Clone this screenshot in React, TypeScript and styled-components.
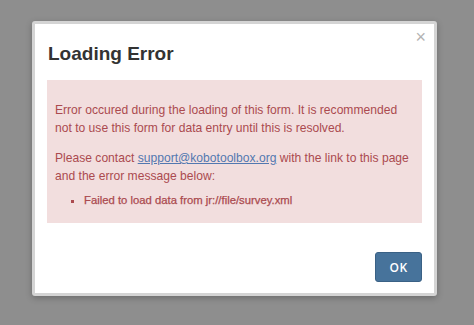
import React from 'react';
import styled, { createGlobalStyle } from 'styled-components';

const GlobalStyle = createGlobalStyle`
  html, body {
    margin: 0;
    padding: 0;
    background: #8e8e8e;
    font-family: "Liberation Sans", Arial, sans-serif;
  }
`;

const Backdrop = styled.div`
  width: 474px;
  height: 325px;
  background: #8e8e8e;
  padding: 21px 0 0 32px;
  box-sizing: border-box;
`;

const Modal = styled.div`
  width: 405px;
  height: 275px;
  box-sizing: border-box;
  background: #fff;
  border: 3px solid #d4d4d4;
  border-radius: 3px;
  box-shadow: 0 2px 6px rgba(0, 0, 0, 0.25);
  display: flex;
  flex-direction: column;
  position: relative;
`;

const Header = styled.div`
  padding: 19px 12px 0 13px;
`;

const Title = styled.h2`
  margin: 0;
  font-size: 19px;
  line-height: 22px;
  font-weight: bold;
  color: #333;
`;

const Close = styled.button`
  position: absolute;
  top: 4px;
  right: 8px;
  border: none;
  background: none;
  padding: 0;
  font-family: "Liberation Sans", Arial, sans-serif;
  font-size: 18px;
  line-height: 18px;
  color: #b3b3b3;
  cursor: pointer;
`;

const Body = styled.div`
  padding: 15px 12px 0 12px;
`;

const Alert = styled.div`
  background: #f2dede;
  color: #ab4a4f;
  padding: 22px 5px 11px 8px;
  height: 143px;
  box-sizing: border-box;
`;

const Para = styled.p<{ $gap?: number }>`
  margin: 0 0 ${(p) => p.$gap ?? 13}px 0;
  font-size: 12.1px;
  line-height: 17.5px;
`;

const Link = styled.a`
  color: #5278b0;
  text-decoration: underline;
`;

const List = styled.ul`
  margin: 0;
  padding-left: 29px;
  font-size: 11.3px;
  line-height: 14px;
  font-weight: normal;
  list-style: square;
  -webkit-text-stroke: 0.25px #ab4a4f;
`;

const Footer = styled.div`
  margin-top: auto;
  padding: 0 12px 11px 0;
  display: flex;
  justify-content: flex-end;
`;

const OkButton = styled.button`
  width: 47px;
  height: 30px;
  background: #47739b;
  border: 1px solid #3a6185;
  border-radius: 3px;
  color: #fff;
  font-family: "Open Sans", sans-serif;
  font-size: 12px;
  font-weight: 600;
  letter-spacing: 0.5px;
  cursor: pointer;
`;

export default function App() {
  return (
    <>
      <GlobalStyle />
      <Backdrop>
        <Modal>
          <Close aria-label="Close">×</Close>
          <Header>
            <Title>Loading Error</Title>
          </Header>
          <Body>
            <Alert>
              <Para>
                Error occured during the loading of this form. It is recommended not to use this
                form for data entry until this is resolved.
              </Para>
              <Para $gap={8}>
                Please contact <Link href="#">support@kobotoolbox.org</Link> with the link to this
                page and the error message below:
              </Para>
              <List>
                <li>Failed to load data from jr://file/survey.xml</li>
              </List>
            </Alert>
          </Body>
          <Footer>
            <OkButton>OK</OkButton>
          </Footer>
        </Modal>
      </Backdrop>
    </>
  );
}
